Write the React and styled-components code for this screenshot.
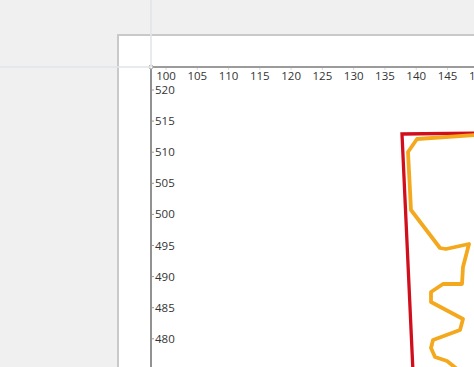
import styled, { createGlobalStyle } from "styled-components";

const GlobalStyle = createGlobalStyle`
  html, body {
    margin: 0;
    padding: 0;
    overflow: hidden;
  }
  body {
    font-family: "Open Sans", "Liberation Sans", sans-serif;
    background: #f0f0f0;
  }
`;

const X_LABELS = [100, 105, 110, 115, 120, 125, 130, 135, 140, 145, 150];
const Y_LABELS = [520, 515, 510, 505, 500, 495, 490, 485, 480];

const X0 = 166; // screen x of 100
const X_STEP = 31.28;
const Y0 = 94; // baseline of 520
const Y_STEP = 31.1;

const outline = [
  [476, 135],
  [417, 139],
  [408, 152],
  [411, 210],
  [440, 248],
  [446, 249],
  [469, 244],
  [463, 267],
  [462, 284],
  [443, 284],
  [431, 292],
  [431, 302],
  [463, 319],
  [460, 330],
  [433, 340],
  [431, 348],
  [435, 357],
  [447, 361],
  [457, 369],
];

export default function App() {
  return (
    <>
      <GlobalStyle />
      <Workspace>
        <GuideV />
        <GuideH />
        <Sheet>
          <Chart viewBox="119 36 360 331" width="360" height="331">
            <line x1="151" y1="67" x2="480" y2="67" stroke="#7a7a7a" strokeWidth="1.5" />
            <line x1="151" y1="67" x2="151" y2="370" stroke="#6e6e6e" strokeWidth="1.5" />
            {X_LABELS.map((v, i) => {
              const x = X0 + i * X_STEP;
              return (
                <g key={v}>
                  <line x1={x} y1="68" x2={x} y2="70" stroke="#d8d8d8" strokeWidth="1" />
                  <AxisText x={x} y="80" textAnchor="middle">
                    {v}
                  </AxisText>
                </g>
              );
            })}
            {Y_LABELS.map((v, i) => {
              const y = Y0 + i * Y_STEP;
              return (
                <g key={v}>
                  <line x1="152" y1={y - 4} x2="154" y2={y - 4} stroke="#9a9a9a" strokeWidth="1" />
                  <AxisText x="155" y={y}>
                    {v}
                  </AxisText>
                </g>
              );
            })}
            <circle cx="151" cy="67" r="2" fill="#fff" stroke="#a8a8a8" strokeWidth="1" />
            <polyline
              points="476,133 402,134 413,372"
              fill="none"
              stroke="#d10f1c"
              strokeWidth="3.3"
              strokeLinejoin="miter"
            />
            <polyline
              points={outline.map((p) => p.join(",")).join(" ")}
              fill="none"
              stroke="#f4a81d"
              strokeWidth="3.8"
              strokeLinejoin="round"
            />
          </Chart>
        </Sheet>
      </Workspace>
    </>
  );
}

const Workspace = styled.div`
  position: relative;
  display: flex;
  width: 474px;
  height: 367px;
  padding: 34px 0 0 117px;
  box-sizing: border-box;
  background: #f0f0f0;
  overflow: hidden;
`;

const Sheet = styled.div`
  flex: 1;
  background: #ffffff;
  border-top: 2px solid #c9c9c9;
  border-left: 2px solid #c9c9c9;
  overflow: hidden;
`;

const Chart = styled.svg`
  display: block;
`;

const AxisText = styled.text`
  font-family: "Open Sans", "Liberation Sans", sans-serif;
  font-size: 11.5px;
  fill: #333333;
`;

const GuideV = styled.div`
  position: absolute;
  left: 150px;
  top: 0;
  width: 2px;
  height: 67px;
  background: #e2e6ea;
  opacity: 0.8;
  z-index: 2;
`;

const GuideH = styled.div`
  position: absolute;
  left: 0;
  top: 66px;
  width: 151px;
  height: 2px;
  background: #e2e6ea;
  opacity: 0.8;
  z-index: 2;
`;
